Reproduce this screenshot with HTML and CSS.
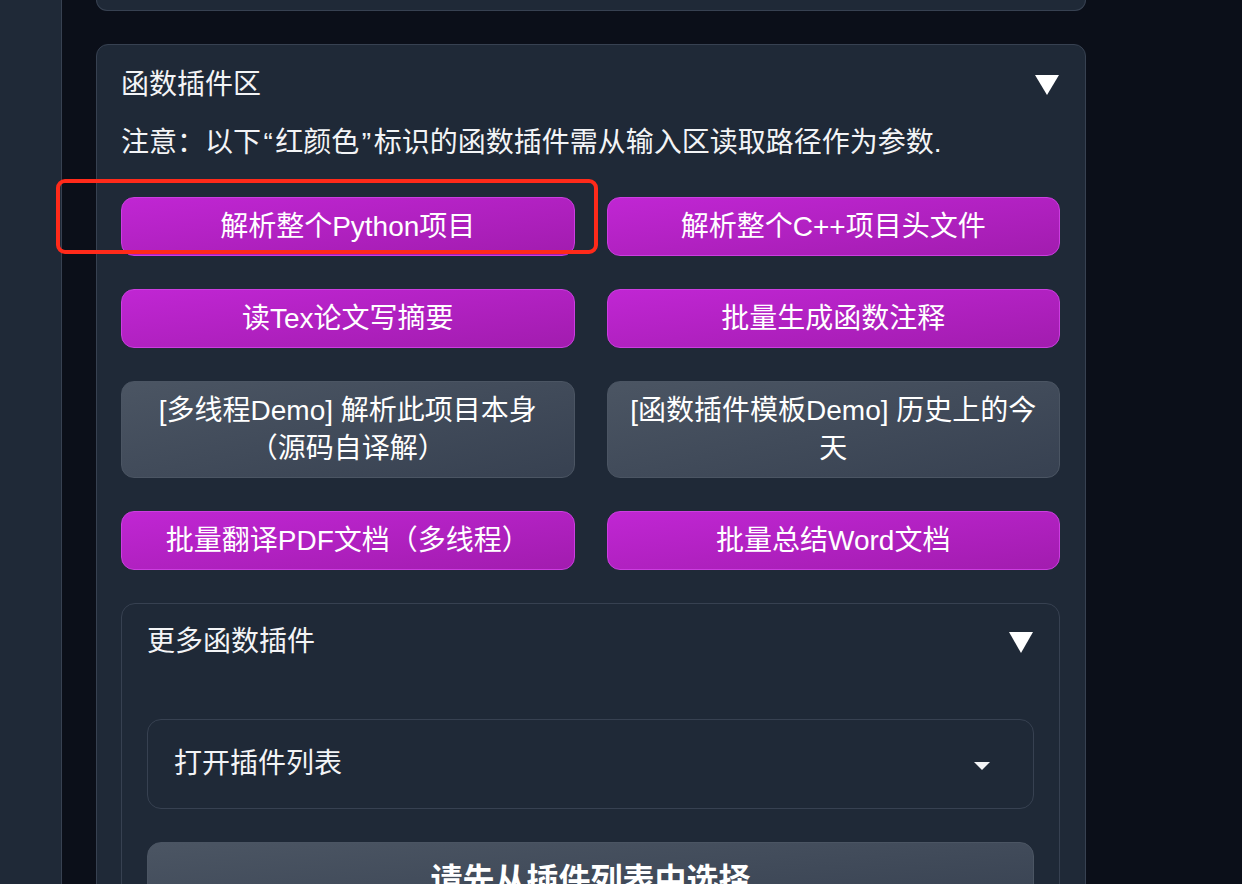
FILE: index.html
```html
<!DOCTYPE html>
<html lang="zh-CN">
<head>
    <meta charset="UTF-8">
    <meta name="viewport" content="width=device-width, initial-scale=1.0">
    <title>函数插件区</title>
    <link rel="stylesheet" href="styles.css">
</head>
<body>
    <aside class="sidebar"></aside>

    <main class="content">
        <div class="panel panel-prev"></div>

        <section class="panel">
            <div class="panel-head">
                <span>函数插件区</span>
                <svg class="tri" width="24" height="20" viewBox="0 0 24 20"><polygon points="0,0 24,0 12,20" fill="#fff"/></svg>
            </div>
            <p class="note">注意：以下<span class="q">“</span>红颜色<span class="q">”</span>标识的函数插件需从输入区读取路径作为参数.</p>

            <div class="btn-grid">
                <button class="btn primary">解析整个Python项目</button>
                <button class="btn primary">解析整个C++项目头文件</button>
                <button class="btn primary">读Tex论文写摘要</button>
                <button class="btn primary">批量生成函数注释</button>
                <button class="btn secondary">[多线程Demo] 解析此项目本身（源码自译解）</button>
                <button class="btn secondary">[函数插件模板Demo] 历史上的今天</button>
                <button class="btn primary">批量翻译PDF文档（多线程）</button>
                <button class="btn primary">批量总结Word文档</button>
            </div>

            <div class="accordion">
                <div class="panel-head sub">
                    <span>更多函数插件</span>
                    <svg class="tri" width="24" height="21" viewBox="0 0 24 21"><polygon points="0,0 24,0 12,21" fill="#fff"/></svg>
                </div>
                <div class="dropdown">
                    <span>打开插件列表</span>
                    <svg class="caret" width="16" height="8" viewBox="0 0 16 8"><polygon points="0,0 16,0 8,8" fill="#f3f4f6"/></svg>
                </div>
                <button class="btn secondary big">请先从插件列表中选择</button>
            </div>
        </section>
    </main>

    <div class="mark"></div>
</body>
</html>
```

FILE: styles.css
```css
body {
    margin: 0;
    height: 100vh;
    overflow: hidden;
    display: flex;
    background-color: #0b0f19;
    color: #f3f4f6;
    font-family: 'Liberation Sans', 'Noto Sans CJK SC', sans-serif;
}

.sidebar {
    width: 61px;
    flex-shrink: 0;
    background-color: #1f2937;
    border-right: 1px solid #374151;
}

.content {
    padding-left: 34px;
    width: 990px;
}

.panel {
    box-sizing: border-box;
    background-color: #1f2937;
    border: 1px solid #374151;
    border-radius: 12px;
    padding: 0 25px 40px 24px;
    margin-top: 33px;
}

.panel-prev {
    height: 11px;
    margin-top: 0;
    border-top: none;
    border-radius: 0 0 12px 12px;
    padding: 0;
}

.panel-head {
    display: flex;
    align-items: center;
    justify-content: space-between;
    padding-top: 20px;
    font-size: 28px;
    line-height: 40px;
}

.panel-head .tri {
    margin-right: 1px;
}

.note {
    margin: 18px 0 0;
    font-size: 28px;
    line-height: 40px;
}

.note .q {
    margin: 0 2.5px;
}

.btn-grid {
    display: grid;
    grid-template-columns: 1fr 1fr;
    column-gap: 32px;
    row-gap: 33px;
    margin-top: 34px;
}

.btn {
    box-sizing: border-box;
    font-family: 'Liberation Sans', 'Noto Sans CJK SC', sans-serif;
    font-size: 28px;
    line-height: 38px;
    padding: 9.5px 14px;
    color: #ffffff;
    border-radius: 13px;
    cursor: pointer;
    text-align: center;
}

.primary {
    background: linear-gradient(to bottom right, #c026d3, #a21caf);
    border: 1px solid #cc3ee0;
}

.secondary {
    background: linear-gradient(to bottom right, #4b5563, #374151);
    border: 1px solid #4b5563;
}

.accordion {
    margin-top: 33px;
    border: 1px solid #374151;
    border-radius: 14px;
    padding: 0 25px 40px;
}

.panel-head.sub {
    padding-top: 18px;
}

.dropdown {
    margin-top: 57px;
    height: 88px;
    border: 1px solid #374151;
    border-radius: 14px;
    display: flex;
    align-items: center;
    justify-content: space-between;
    padding: 0 43px 0 26px;
    font-size: 28px;
    line-height: 40px;
}

.caret {
    margin-top: 3px;
}

.big {
    display: block;
    width: 100%;
    margin-top: 33px;
    font-size: 32px;
    line-height: 44px;
    font-weight: 700;
    padding: 15px 14px;
    border-radius: 14px;
}

/* red annotation frame */
.mark {
    position: absolute;
    left: 56px;
    top: 179px;
    width: 534px;
    height: 67px;
    border: 4px solid #ff2a1a;
    border-radius: 9px;
}
```
